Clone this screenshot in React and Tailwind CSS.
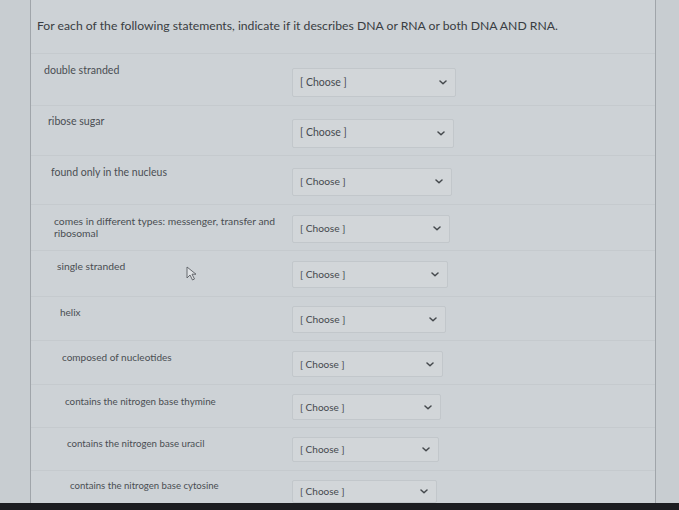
import React from "react";

// one row per statement; boxes shrink a little toward the bottom like the photo
const ROWS = [
  { label: "double stranded", h: "h-[52px]", lt: "pt-[10px]", st: "pt-[14px]", pl: "pl-[13px]", fs: "text-[10.6px]", sw: "w-[164px]", sh: "h-[29px]", cs: "text-[10.5px]" },
  { label: "ribose sugar", h: "h-[50px]", lt: "pt-[9px]", st: "pt-[13px]", pl: "pl-[17px]", fs: "text-[10.6px]", sw: "w-[162px]", sh: "h-[29px]", cs: "text-[10.5px]" },
  { label: "found only in the nucleus", h: "h-[49px]", lt: "pt-[10px]", st: "pt-[12px]", pl: "pl-[20px]", fs: "text-[10.5px]", sw: "w-[160px]", sh: "h-[28px]", cs: "text-[10.3px]" },
  { label: "comes in different types: messenger, transfer and ribosomal", h: "h-[47px]", lt: "pt-[10px]", st: "pt-[10px]", pl: "pl-[23px]", fs: "text-[10.3px]", sw: "w-[158px]", sh: "h-[28px]", cs: "text-[10.2px]" },
  { label: "single stranded", h: "h-[46px]", lt: "pt-[9px]", st: "pt-[10px]", pl: "pl-[26px]", fs: "text-[10.3px]", sw: "w-[156px]", sh: "h-[27px]", cs: "text-[10.2px]" },
  { label: "helix", h: "h-[44px]", lt: "pt-[9px]", st: "pt-[9px]", pl: "pl-[29px]", fs: "text-[10px]", sw: "w-[154px]", sh: "h-[27px]", cs: "text-[10.2px]" },
  { label: "composed of nucleotides", h: "h-[44px]", lt: "pt-[10px]", st: "pt-[10px]", pl: "pl-[31px]", fs: "text-[10px]", sw: "w-[151px]", sh: "h-[26px]", cs: "text-[10px]" },
  { label: "contains the nitrogen base thymine", h: "h-[43px]", lt: "pt-[10px]", st: "pt-[9px]", pl: "pl-[34px]", fs: "text-[9.8px]", sw: "w-[149px]", sh: "h-[26px]", cs: "text-[10px]" },
  { label: "contains the nitrogen base uracil", h: "h-[43px]", lt: "pt-[9px]", st: "pt-[9px]", pl: "pl-[36px]", fs: "text-[9.7px]", sw: "w-[147px]", sh: "h-[25px]", cs: "text-[10px]" },
  { label: "contains the nitrogen base cytosine", h: "flex-1", lt: "pt-[9px]", st: "pt-[9px]", pl: "pl-[39px]", fs: "text-[9.6px]", sw: "w-[145px]", sh: "h-[23px]", cs: "text-[10px]" },
];

function Chevron() {
  return (
    <svg width="8" height="5" viewBox="0 0 8 5" className="shrink-0">
      <path d="M1 1l3 2.8L7 1" fill="none" stroke="#45494d" strokeWidth="1.5" strokeLinecap="round" strokeLinejoin="round" />
    </svg>
  );
}

function Row({ r }) {
  return (
    <div className={`${r.h} flex border-t border-[#c5cace]`}>
      <div className={`w-[261px] shrink-0 pr-[8px] ${r.pl} ${r.lt}`}>
        <p className={`${r.fs} leading-[12px] text-[#4a4e53]`}>{r.label}</p>
      </div>
      <div className={r.st}>
        <div className={`${r.sw} ${r.sh} flex items-center justify-between rounded-[2px] border border-[#c2c7cb] bg-[#d2d6d9] pl-[7px] pr-[8px]`}>
          <span className={`${r.cs} text-[#45494e]`}>[ Choose ]</span>
          <Chevron />
        </div>
      </div>
    </div>
  );
}

export default function App() {
  return (
    <div className="relative h-[510px] w-[679px] overflow-hidden flex flex-col bg-[#c8cdd1] font-['Lato','Open_Sans',sans-serif]">
      <div className="flex-1 flex pl-[30px] pr-[23px] min-h-0">
        {/* panel */}
        <div className="flex-1 flex flex-col border-l border-r border-[#a0a5aa] bg-[#cdd2d6]">
          <div className="h-[53px] pl-[6px] pt-[18px]">
            <h1 className="text-[12.2px] leading-[16px] text-[#393d42] whitespace-nowrap">
              For each of the following statements, indicate if it describes DNA or RNA or both DNA AND RNA.
            </h1>
          </div>
          {ROWS.map((r) => (
            <Row key={r.label} r={r} />
          ))}
        </div>
      </div>

      {/* monitor bezel */}
      <div className="h-[7px] bg-[#1c1d21]" />

      {/* mouse pointer */}
      <svg className="absolute left-[186px] top-[266px]" width="12" height="16" viewBox="0 0 12 16">
        <path d="M1 1v11l3-3 2.5 5 2-1-2.5-4.8H10z" fill="#dfe2e5" stroke="#5a5e63" strokeWidth="0.9" strokeLinejoin="round" />
      </svg>
    </div>
  );
}
